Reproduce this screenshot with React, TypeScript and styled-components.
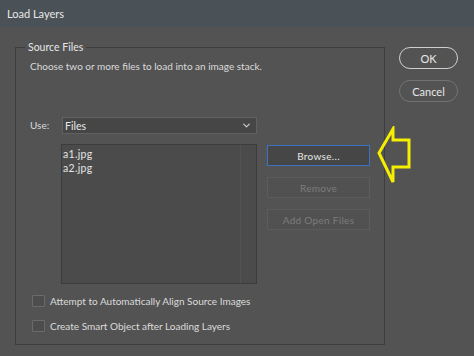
import React from 'react';
import styled, { createGlobalStyle } from 'styled-components';
import { ChevronDown } from 'lucide-react';

const Global = createGlobalStyle`
  html, body {
    margin: 0;
    padding: 0;
    background: #535353;
  }
  body {
    font-family: Lato, "Open Sans", sans-serif;
    font-size: 10px;
    color: #e2e2e2;
  }
`;

const Dialog = styled.div`
  position: relative;
  width: 474px;
  height: 356px;
  background: #535353;
  overflow: hidden;
`;

const TitleBar = styled.div`
  height: 27px;
  background: #4b5257;
  display: flex;
  align-items: center;
  padding-left: 7px;
  font-size: 11px;
  color: #e8e8e8;
`;

const Body = styled.div`
  display: flex;
  align-items: flex-start;
  padding: 14px 0 0 15px;
  gap: 14px;
`;

const Group = styled.fieldset`
  margin: 0;
  min-width: 0;
  width: 370px;
  height: 304px;
  box-sizing: border-box;
  border: 1px solid #3e3e3e;
  padding: 0 14px;
  display: flex;
  flex-direction: column;
`;

const Legend = styled.legend`
  padding: 0 3px;
  margin-left: -5px;
  font-size: 10.5px;
  color: #e6e6e6;
`;

const Description = styled.div`
  margin-top: 7px;
  color: #dadada;
`;

const Grid = styled.div`
  margin-top: 45px;
  display: grid;
  grid-template-columns: 31px 196px 113px;
  row-gap: 10px;
  align-items: start;
`;

const Label = styled.div`
  height: 17px;
  line-height: 17px;
  color: #d8d8d8;
`;

const Select = styled.div`
  height: 17px;
  box-sizing: border-box;
  margin-left: 1px;
  border: 1px solid #616161;
  background: #464646;
  display: flex;
  align-items: center;
  justify-content: space-between;
  padding: 0 4px 0 2px;
  color: #e8e8e8;
  font-size: 10.5px;
`;

const ListBox = styled.div`
  height: 140px;
  box-sizing: border-box;
  border: 1px solid #3c3c3c;
  background: #4b4b4b;
  display: flex;
`;

const Items = styled.div`
  flex: 1;
  padding: 2px 0 0 1px;
  font-size: 10.5px;
  line-height: 14px;
  color: #e4e4e4;
  letter-spacing: 0.3px;
`;

const Track = styled.div`
  width: 15px;
  border-left: 1px solid #535353;
`;

const Buttons = styled.div`
  display: flex;
  flex-direction: column;
  gap: 11px;
  padding: 1px 0 0 10px;
`;

const Button = styled.div<{ $focus?: boolean; $disabled?: boolean }>`
  height: 21px;
  box-sizing: border-box;
  display: flex;
  align-items: center;
  justify-content: center;
  border: 1px solid ${(p) => (p.$focus ? '#3b72c2' : '#5c5c5c')};
  background: ${(p) => (p.$focus ? '#464646' : '#515151')};
  color: ${(p) => (p.$disabled ? '#7c7c7c' : '#e6e6e6')};
  letter-spacing: 0.3px;
`;

const Checks = styled.div`
  margin-top: 9px;
  display: flex;
  flex-direction: column;
  gap: 10px;
  padding-left: 2px;
`;

const CheckRow = styled.label`
  display: flex;
  align-items: center;
  gap: 5px;
  height: 15px;
  color: #dcdcdc;
`;

const Box = styled.span`
  width: 11px;
  height: 10px;
  border: 1px solid #6a6a6a;
  background: #4d4d4d;
  border-radius: 1px;
`;

const Side = styled.div`
  display: flex;
  flex-direction: column;
  gap: 11px;
  padding-top: 6px;
`;

const Pill = styled.div<{ $primary?: boolean }>`
  width: 59px;
  height: 22px;
  box-sizing: border-box;
  border-radius: 11px;
  border: 1px solid ${(p) => (p.$primary ? '#cfcfcf' : '#727272')};
  display: flex;
  align-items: center;
  justify-content: center;
  color: #e8e8e8;
  font-size: 11px;
`;

const Arrow = styled.svg`
  position: absolute;
  left: 376px;
  top: 126px;
`;

export default function App() {
  return (
    <Dialog>
      <Global />
      <TitleBar>Load Layers</TitleBar>
      <Body>
        <Group>
          <Legend>Source Files</Legend>
          <Description>Choose two or more files to load into an image stack.</Description>
          <Grid>
            <Label>Use:</Label>
            <Select>
              <span>Files</span>
              <ChevronDown size={11} color="#cfcfcf" strokeWidth={2.5} />
            </Select>
            <div />
            <div />
            <ListBox>
              <Items>
                <div>a1.jpg</div>
                <div>a2.jpg</div>
              </Items>
              <Track />
            </ListBox>
            <Buttons>
              <Button $focus>Browse...</Button>
              <Button $disabled>Remove</Button>
              <Button $disabled>Add Open Files</Button>
            </Buttons>
          </Grid>
          <Checks>
            <CheckRow>
              <Box />
              Attempt to Automatically Align Source Images
            </CheckRow>
            <CheckRow>
              <Box />
              Create Smart Object after Loading Layers
            </CheckRow>
          </Checks>
        </Group>
        <Side>
          <Pill $primary>OK</Pill>
          <Pill>Cancel</Pill>
        </Side>
      </Body>
      <Arrow width="36" height="60" viewBox="0 0 36 60">
        <path
          d="M3 27 L17 3 L17 14 L33 14 L33 41 L17 41 L17 56 Z"
          fill="none"
          stroke="#f4ef00"
          strokeWidth="3"
          strokeLinejoin="miter"
        />
      </Arrow>
    </Dialog>
  );
}
